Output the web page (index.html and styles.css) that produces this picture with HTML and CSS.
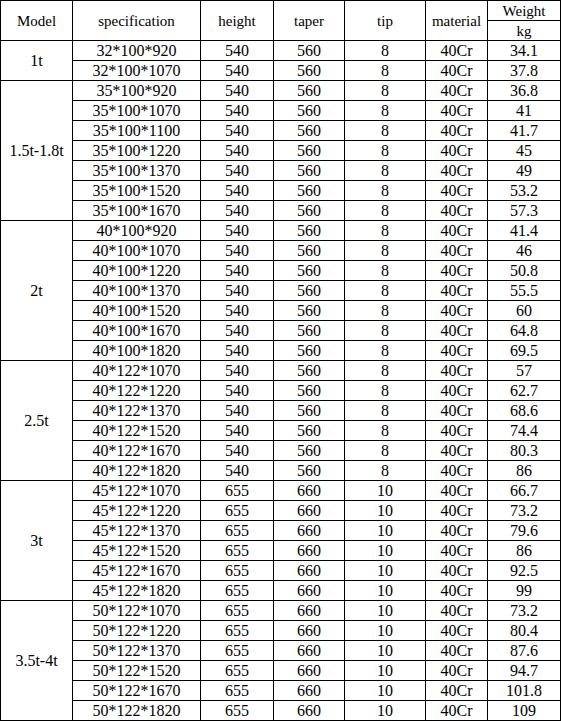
FILE: index.html
```html
<!DOCTYPE html>
<html>
<head>
<meta charset="utf-8">
<link rel="stylesheet" href="styles.css">
</head>
<body>
<table class="spec">
<colgroup>
<col class="c-model"><col class="c-spec"><col class="c-height"><col class="c-taper"><col class="c-tip"><col class="c-mat"><col class="c-wt">
</colgroup>
<thead>
<tr class="hrow"><th rowspan="2">Model</th><th rowspan="2">specification</th><th rowspan="2">height</th><th rowspan="2">taper</th><th rowspan="2">tip</th><th rowspan="2">material</th><th>Weight</th></tr>
<tr class="hrow"><th>kg</th></tr>
</thead>
<tbody>
<tr><td rowspan="2">1t</td><td>32*100*920</td><td>540</td><td>560</td><td>8</td><td>40Cr</td><td>34.1</td></tr>
<tr><td>32*100*1070</td><td>540</td><td>560</td><td>8</td><td>40Cr</td><td>37.8</td></tr>
<tr><td rowspan="7">1.5t-1.8t</td><td>35*100*920</td><td>540</td><td>560</td><td>8</td><td>40Cr</td><td>36.8</td></tr>
<tr><td>35*100*1070</td><td>540</td><td>560</td><td>8</td><td>40Cr</td><td>41</td></tr>
<tr><td>35*100*1100</td><td>540</td><td>560</td><td>8</td><td>40Cr</td><td>41.7</td></tr>
<tr><td>35*100*1220</td><td>540</td><td>560</td><td>8</td><td>40Cr</td><td>45</td></tr>
<tr><td>35*100*1370</td><td>540</td><td>560</td><td>8</td><td>40Cr</td><td>49</td></tr>
<tr><td>35*100*1520</td><td>540</td><td>560</td><td>8</td><td>40Cr</td><td>53.2</td></tr>
<tr><td>35*100*1670</td><td>540</td><td>560</td><td>8</td><td>40Cr</td><td>57.3</td></tr>
<tr><td rowspan="7">2t</td><td>40*100*920</td><td>540</td><td>560</td><td>8</td><td>40Cr</td><td>41.4</td></tr>
<tr><td>40*100*1070</td><td>540</td><td>560</td><td>8</td><td>40Cr</td><td>46</td></tr>
<tr><td>40*100*1220</td><td>540</td><td>560</td><td>8</td><td>40Cr</td><td>50.8</td></tr>
<tr><td>40*100*1370</td><td>540</td><td>560</td><td>8</td><td>40Cr</td><td>55.5</td></tr>
<tr><td>40*100*1520</td><td>540</td><td>560</td><td>8</td><td>40Cr</td><td>60</td></tr>
<tr><td>40*100*1670</td><td>540</td><td>560</td><td>8</td><td>40Cr</td><td>64.8</td></tr>
<tr><td>40*100*1820</td><td>540</td><td>560</td><td>8</td><td>40Cr</td><td>69.5</td></tr>
<tr><td rowspan="6">2.5t</td><td>40*122*1070</td><td>540</td><td>560</td><td>8</td><td>40Cr</td><td>57</td></tr>
<tr><td>40*122*1220</td><td>540</td><td>560</td><td>8</td><td>40Cr</td><td>62.7</td></tr>
<tr><td>40*122*1370</td><td>540</td><td>560</td><td>8</td><td>40Cr</td><td>68.6</td></tr>
<tr><td>40*122*1520</td><td>540</td><td>560</td><td>8</td><td>40Cr</td><td>74.4</td></tr>
<tr><td>40*122*1670</td><td>540</td><td>560</td><td>8</td><td>40Cr</td><td>80.3</td></tr>
<tr><td>40*122*1820</td><td>540</td><td>560</td><td>8</td><td>40Cr</td><td>86</td></tr>
<tr><td rowspan="6">3t</td><td>45*122*1070</td><td>655</td><td>660</td><td>10</td><td>40Cr</td><td>66.7</td></tr>
<tr><td>45*122*1220</td><td>655</td><td>660</td><td>10</td><td>40Cr</td><td>73.2</td></tr>
<tr><td>45*122*1370</td><td>655</td><td>660</td><td>10</td><td>40Cr</td><td>79.6</td></tr>
<tr><td>45*122*1520</td><td>655</td><td>660</td><td>10</td><td>40Cr</td><td>86</td></tr>
<tr><td>45*122*1670</td><td>655</td><td>660</td><td>10</td><td>40Cr</td><td>92.5</td></tr>
<tr><td>45*122*1820</td><td>655</td><td>660</td><td>10</td><td>40Cr</td><td>99</td></tr>
<tr><td rowspan="6">3.5t-4t</td><td>50*122*1070</td><td>655</td><td>660</td><td>10</td><td>40Cr</td><td>73.2</td></tr>
<tr><td>50*122*1220</td><td>655</td><td>660</td><td>10</td><td>40Cr</td><td>80.4</td></tr>
<tr><td>50*122*1370</td><td>655</td><td>660</td><td>10</td><td>40Cr</td><td>87.6</td></tr>
<tr><td>50*122*1520</td><td>655</td><td>660</td><td>10</td><td>40Cr</td><td>94.7</td></tr>
<tr><td>50*122*1670</td><td>655</td><td>660</td><td>10</td><td>40Cr</td><td>101.8</td></tr>
<tr><td>50*122*1820</td><td>655</td><td>660</td><td>10</td><td>40Cr</td><td>109</td></tr>
</tbody>
</table>
</body>
</html>
```
FILE: styles.css
```css
html, body {
  margin: 0;
  padding: 0;
  background: #fff;
}
.spec {
  border-collapse: collapse;
  table-layout: fixed;
  width: 560px;
  font-family: "Liberation Serif", "Times New Roman", serif;
  font-size: 16px;
  color: #000;
}
.c-model { width: 72px; }
.c-spec { width: 128px; }
.c-height { width: 73px; }
.c-taper { width: 71px; }
.c-tip { width: 81px; }
.c-mat { width: 62px; }
.c-wt { width: 73px; }
.spec th, .spec td {
  border: 1px solid #000;
  padding: 0;
  text-align: center;
  vertical-align: middle;
  font-weight: normal;
  line-height: 18px;
  height: 19px;
  white-space: nowrap;
}
.spec th {
  font-size: 15px;
}
```
